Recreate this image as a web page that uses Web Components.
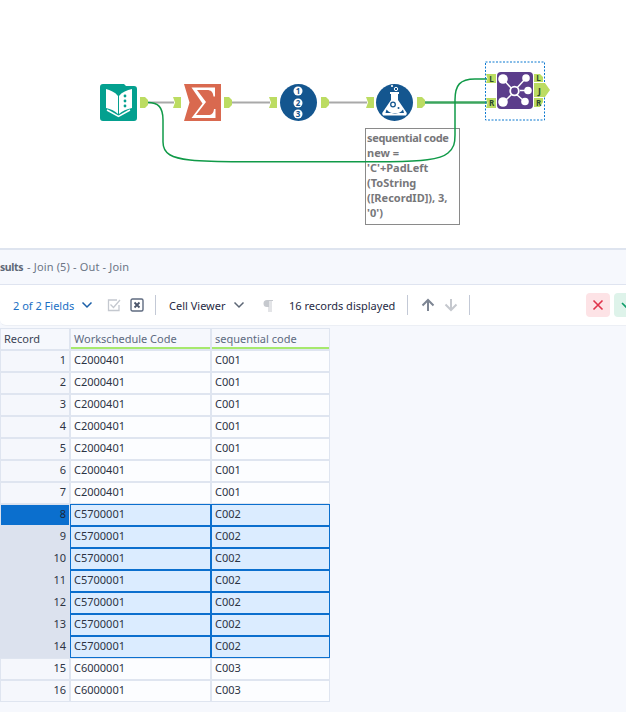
<!DOCTYPE html>
<html>
<head>
<meta charset="utf-8">
<title>Results</title>
<style>
  html, body { margin: 0; height: 712px; overflow: hidden; background: #fff; }
  body { font-family: "Noto Sans", "Open Sans", sans-serif; font-size: 11px; }
  .tight { letter-spacing: -.35px; }
</style>
</head>
<body>
<workflow-canvas>
  <canvas-note><span class="tight">sequential code</span><br>new =<br>'C'+PadLeft<br>(ToString<br>([RecordID]), 3,<br>'0')</canvas-note>
</workflow-canvas>
<results-panel>
  <results-toolbar></results-toolbar>
  <data-grid></data-grid>
</results-panel>

<script>
const records = [
  ["C2000401", "C001"], ["C2000401", "C001"], ["C2000401", "C001"], ["C2000401", "C001"],
  ["C2000401", "C001"], ["C2000401", "C001"], ["C2000401", "C001"],
  ["C5700001", "C002"], ["C5700001", "C002"], ["C5700001", "C002"], ["C5700001", "C002"],
  ["C5700001", "C002"], ["C5700001", "C002"], ["C5700001", "C002"],
  ["C6000001", "C003"], ["C6000001", "C003"],
];

class CanvasNote extends HTMLElement {
  constructor() {
    super();
    this.attachShadow({ mode: "open" }).innerHTML = `
      <style>
        :host {
          position: absolute; left: 365px; top: 128px; width: 95px; height: 97px;
          box-sizing: border-box; border: 1px solid #8a8a8a; background: #fff;
          padding: 1px 1px 0 1px; color: #77777a; font-weight: 700;
          font-size: 11px; line-height: 15px; white-space: nowrap;
        }
      </style>
      <slot></slot>
    `;
  }
}
customElements.define("canvas-note", CanvasNote);

class WorkflowCanvas extends HTMLElement {
  constructor() {
    super();
    const anchor = "#bcdc62";
    this.attachShadow({ mode: "open" }).innerHTML = `
      <style>
        :host { display: block; position: relative; height: 248px; background: #fff; }
        svg { position: absolute; left: 0; top: 0; }
        .wires { z-index: 2; pointer-events: none; }
        text { font-family: "Noto Sans", sans-serif; font-weight: 700; }
      </style>
      <slot></slot>
      <svg class="wires" width="626" height="248" viewBox="0 0 626 248">
        <g fill="none">
          <path d="M148 102.500H174M232 102.500H270M328 102.500H367" stroke="#a9a9a9" stroke-width="2"/>
          <path d="M424 102.500H487" stroke="#3ba55d" stroke-width="2.500"/>
          <path d="M148 102.500C158 102.500 163 107 163 120V142C163 154 172 158 190 160C205 161.500 225 161.700 240 161.700H390C420 161 440 160 448 153C454 148 455 143 455 135V100C455 85 460 79 475 79H487" stroke="#109a48" stroke-width="1.500"/>
        </g>

        <!-- input tool -->
        <path d="M103 84h21l2 2h8a3 3 0 0 1 3 3v29a3 3 0 0 1-3 3h-31a3 3 0 0 1-3-3V87a3 3 0 0 1 3-3z" fill="#04a08f"/>
        <path d="M118 96C115 92 110 90 106 89V108C111 109 115 111 118 114zM119 96C122 92 127 90 132 89V108C127 109 122 111 119 114z" fill="#fff"/>
        <path d="M107 110l11.500 6.500 11.500-6.500" fill="none" stroke="#fff" stroke-width="1.500"/>
        <g fill="#04a08f"><circle cx="125" cy="96" r="1.400"/><circle cx="125" cy="101" r="1.400"/><circle cx="125" cy="106" r="1.400"/></g>
        <path d="M140 97h5l3 3v5l-3 3h-5z" fill="${anchor}"/>

        <!-- summarize tool -->
        <path d="M173 97h8v11h-8l2-5.500z" fill="${anchor}"/>
        <path d="M184 84h37v37h-37l5.500-18.500z" fill="#d9694f"/>
        <path d="M191.500 87.500H215V96.500H213.500C213 92 211 90 207 90H197L206 102L196 115H208C212 115 213.500 113 214 109H215.500V118H191.500L202.500 103.500z" fill="#fff"/>
        <path d="M224 97h5l3 3v5l-3 3h-5z" fill="${anchor}"/>

        <!-- record id tool -->
        <path d="M269 97h8v11h-8l2-5.500z" fill="${anchor}"/>
        <circle cx="298.500" cy="102.500" r="18.500" fill="#14568f"/>
        <g fill="#fff"><circle cx="298" cy="91" r="4.500"/><circle cx="298" cy="103" r="4.500"/><circle cx="298" cy="114" r="4.500"/></g>
        <g fill="#14568f" font-size="8" text-anchor="middle"><text x="298" y="94">1</text><text x="298" y="106">2</text><text x="298" y="117">3</text></g>
        <path d="M321 97h5l3 3v5l-3 3h-5z" fill="${anchor}"/>

        <!-- formula tool -->
        <path d="M366 97h8v11h-8l2-5.500z" fill="${anchor}"/>
        <circle cx="394.500" cy="102.500" r="18.500" fill="#14568f"/>
        <path d="M390 92h9v2h-1v6l8.500 12.500a2 2 0 0 1-2 3h-20a2 2 0 0 1-2-3l8.500-12.500v-6h-1z" fill="#fff"/>
        <path d="M386.500 109.500c2.500 3 6 4 8.500 4s6-1 8-4l1 3.500h-18.500z" fill="#14568f"/>
        <circle cx="393" cy="104.500" r="2.300" fill="none" stroke="#14568f" stroke-width="1.300"/>
        <circle cx="398.500" cy="108" r="1" fill="#14568f"/>
        <circle cx="396" cy="89" r="1.700" fill="none" stroke="#fff"/>
        <circle cx="392" cy="86" r="1.100" fill="#fff"/>
        <path d="M417 97h5l3 3v5l-3 3h-5z" fill="${anchor}"/>

        <!-- join tool -->
        <rect x="485.500" y="62" width="59" height="58" fill="none" stroke="#0b78d0" stroke-dasharray="2 1.500"/>
        <path d="M486 74h10v9h-10l1.500-4.500zM486 98h10v10h-10l1.500-5z" fill="${anchor}"/>
        <rect x="497" y="72" width="36" height="37" rx="4" fill="#5b3d8b"/>
        <g stroke="#fff" stroke-width="1.500">
          <path d="M503 79l9 10M526 78l-10 11M528 90.500h-8M504 102l8-8M524 101l-8-7"/>
        </g>
        <circle cx="514.500" cy="91" r="4.300" fill="#5b3d8b" stroke="#fff" stroke-width="1.800"/>
        <g fill="#fff">
          <circle cx="503" cy="79" r="4.800"/><circle cx="526" cy="78" r="3.800"/><circle cx="528" cy="90.500" r="3.800"/>
          <circle cx="503" cy="102" r="4.800"/><circle cx="525" cy="101.500" r="3.800"/>
        </g>
        <path d="M534 74h6l3 3v5h-9zM534 98h9v4l-3 5h-6z" fill="${anchor}"/>
        <path d="M534 83h11l5 7-5 7h-11z" fill="${anchor}"/>
        <g fill="#2b4a2b" font-size="8" text-anchor="middle">
          <text x="491.500" y="81.500">L</text><text x="491.500" y="105.500">R</text>
          <text x="538.500" y="81">L</text><text x="539.500" y="93.500" font-size="9">J</text><text x="538.500" y="105.500">R</text>
        </g>
      </svg>
    `;
  }
}
customElements.define("workflow-canvas", WorkflowCanvas);

class ResultsPanel extends HTMLElement {
  constructor() {
    super();
    this.attachShadow({ mode: "open" }).innerHTML = `
      <style>
        :host { display: block; height: 464px; background: #f6f8fd; border-top: 2px solid #dee4ef; box-sizing: border-box; overflow: hidden; }
        .title { height: 33px; padding-bottom: 1px; display: flex; align-items: center; gap: 4px; color: #6c7686; font-size: 11px; letter-spacing: .15px; border-bottom: 1px solid #dfe4f0; }
        b { color: #5f6877; font-weight: 700; font-size: 10.500px; letter-spacing: -.4px; }
      </style>
      <div class="title"><b>sults</b><span>- Join (5) - Out - Join</span></div>
      <slot></slot>
    `;
  }
}
customElements.define("results-panel", ResultsPanel);

class ResultsToolbar extends HTMLElement {
  constructor() {
    super();
    const chevron = (color) => `<svg width="12" height="8" viewBox="0 0 12 8"><path d="M1.500 1.500L6 6l4.500-4.500" fill="none" stroke="${color}" stroke-width="1.500"/></svg>`;
    this.attachShadow({ mode: "open" }).innerHTML = `
      <style>
        :host {
          display: flex; align-items: center; height: 41px; box-sizing: border-box;
          background: #fff; border-bottom: 1px solid #eceff5; border-radius: 0 0 0 6px;
          padding-left: 13px; color: #1f2a44; font-size: 11px; overflow: hidden;
        }
        .fields { color: #1a6fc4; width: 68px; white-space: nowrap; }
        .chev { display: flex; }
        .sep { width: 1px; height: 20px; background: #c3c9d6; flex: none; }
        .icon { display: flex; flex: none; }
        .spacer { flex: 1; }
        .btn { width: 24px; height: 24px; border-radius: 4px; display: flex; align-items: center; justify-content: center; flex: none; }
        .red { background: #fde3e6; margin-right: 4px; }
        .green { background: #def3ea; margin-right: -12px; }
      </style>
      <span class="fields">2 of 2 Fields</span>
      <span class="chev">${chevron("#1a5fa8")}</span>
      <span class="icon" style="margin-left:14px"><svg width="14" height="14" viewBox="0 0 14 14" fill="none"><path d="M12 7v5.500H1.500V2H10" stroke="#c4c8cf" stroke-width="1.300"/><path d="M3.500 6.500L6.500 9.500 13 2" stroke="#c4c8cf" stroke-width="1.300"/></svg></span>
      <span class="icon" style="margin-left:9px"><svg width="14" height="14" viewBox="0 0 14 14" fill="none"><rect x="1" y="1" width="12" height="12" rx="1.500" stroke="#5f6b80" stroke-width="1.400"/><path d="M4.500 4.500l5 5M9.500 4.500l-5 5" stroke="#4a556a" stroke-width="1.800"/></svg></span>
      <span class="sep" style="margin-left:11px"></span>
      <span style="margin-left:13px;width:57px;white-space:nowrap">Cell Viewer</span>
      <span class="chev" style="margin-left:7px">${chevron("#5c6675")}</span>
      <span class="icon" style="margin-left:17px"><svg width="12" height="13" viewBox="0 0 12 13"><path d="M11 1H5a3.500 3.500 0 0 0 0 7h1.500v5h1V2h1v11h1V2H11z" fill="#c6c9ce"/></svg></span>
      <span style="margin-left:15px;width:107px;white-space:nowrap">16 records displayed</span>
      <span class="sep" style="margin-left:11px"></span>
      <span class="icon" style="margin-left:13px"><svg width="14" height="14" viewBox="0 0 14 14" fill="none"><path d="M7 13V2M1.500 7.500L7 2l5.500 5.500" stroke="#7d8593" stroke-width="2"/></svg></span>
      <span class="icon" style="margin-left:9px"><svg width="14" height="14" viewBox="0 0 14 14" fill="none"><path d="M7 1v11M1.500 6.500L7 12l5.500-5.500" stroke="#c5c8ce" stroke-width="2"/></svg></span>
      <span class="sep" style="margin-left:11px"></span>
      <span class="spacer"></span>
      <span class="btn red"><svg width="12" height="12" viewBox="0 0 12 12"><path d="M1.500 1.500l9 9M10.500 1.500l-9 9" stroke="#e0334b" stroke-width="1.600"/></svg></span>
      <span class="btn green"><svg width="12" height="12" viewBox="0 0 12 12"><path d="M2 4l4 4 4-4" fill="none" stroke="#0f9d6a" stroke-width="1.600"/></svg></span>
    `;
  }
}
customElements.define("results-toolbar", ResultsToolbar);

class DataGrid extends HTMLElement {
  constructor() {
    super();
    const rows = records.map((rec, i) => {
      const n = i + 1;
      const sel = n >= 8 && n <= 14;
      const active = n === 8 ? " active" : "";
      return `
        <div class="cell rec${sel ? " rec-sel" : ""}${active}">${n}</div>
        <div class="cell${sel ? " sel" : ""}">${rec[0]}</div>
        <div class="cell${sel ? " sel" : ""}">${rec[1]}</div>`;
    }).join("");
    this.attachShadow({ mode: "open" }).innerHTML = `
      <style>
        :host {
          display: grid; grid-template-columns: 70px 141px 119px; grid-auto-rows: 22px;
          width: 330px; margin-top: 2px; font-size: 11px; color: #2c3444;
        }
        .cell {
          box-sizing: border-box; border: 1px solid #dfe5f0; background: #fcfdff;
          padding: 0 3px; line-height: 18px; white-space: nowrap; overflow: hidden;
        }
        .head { background: #f6f8fd; color: #5d6a80; line-height: 19px; }
        .head.first { color: #3a4354; }
        .head.key { box-shadow: inset 0 -2px 0 #a6e96d; }
        .rec { background: #f5f7fc; text-align: right; padding-right: 3px; }
        .rec-sel { background: #dce2ee; border-color: #dce2ee; }
        .active { background: #0b6fce; border-color: #dce2ee; color: #1c2a3c; }
        .sel { background: #dbecff; border-color: #0b6fce; }
      </style>
      <div class="cell head first">Record</div>
      <div class="cell head key">Workschedule Code</div>
      <div class="cell head key">sequential code</div>
      ${rows}
    `;
  }
}
customElements.define("data-grid", DataGrid);
</script>
</body>
</html>
